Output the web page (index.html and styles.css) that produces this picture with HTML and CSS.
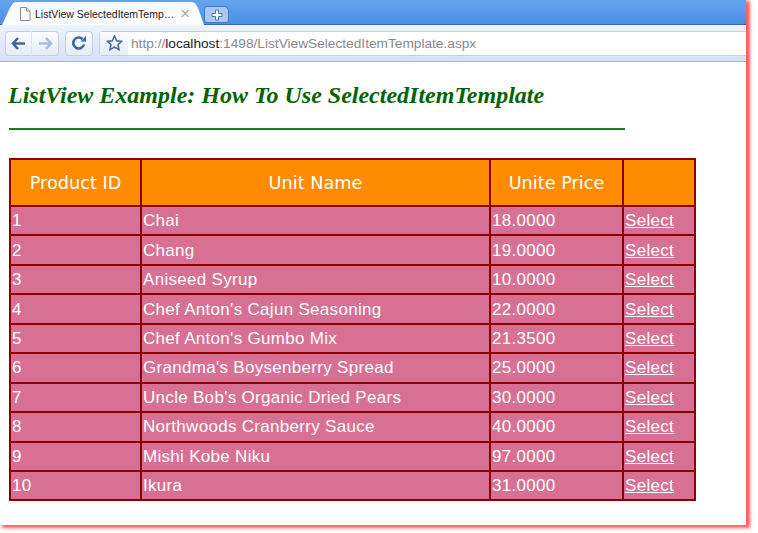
FILE: index.html
```html
<!DOCTYPE html>
<html lang="en">
<head>
<meta charset="utf-8">
<title>ListView SelectedItemTemplate</title>
<link rel="stylesheet" href="styles.css">
</head>
<body>
<div class="window">
  <div class="tabstrip">
    <div class="tab">
      <svg class="page-icon" width="12" height="14" viewBox="0 0 12 14"><path d="M1.5.5h6l3.5 3.5v9.500h-9.500z" fill="#fff" stroke="#8a8a8a"/><path d="M7.500.5v3.500h3.500" fill="#e8e8e8" stroke="#8a8a8a"/></svg>
      <span class="tab-title">ListView SelectedItemTemp…</span>
      <span class="tab-close">×</span>
    </div>
    <div class="new-tab"><svg width="12" height="12" viewBox="0 0 12 12"><path d="M4.500 1h3v3.500H11v3H7.500V11h-3V7.500H1v-3h3.500z" fill="#fff" stroke="#4a78b0"/></svg></div>
  </div>
  <div class="toolbar">
    <div class="btn-group">
      <div class="btn half"><svg width="15" height="13" viewBox="0 0 15 13"><path d="M7 1 2 6.500 7 12M2.500 6.500H14" fill="none" stroke="#3f6899" stroke-width="2.600"/></svg></div>
      <div class="btn half"><svg width="15" height="13" viewBox="0 0 15 13"><path d="M8 1l5 5.500L8 12M12.500 6.500H1" fill="none" stroke="#a9bdd8" stroke-width="2.600"/></svg></div>
    </div>
    <div class="btn single"><svg width="16" height="16" viewBox="0 0 16 16"><path d="M13 9.500A5.500 5.500 0 1 1 11.500 4" fill="none" stroke="#3f6899" stroke-width="2.600"/><path d="M9.500 6.500h5.500V1z" fill="#3f6899"/></svg></div>
    <div class="omnibox">
      <div class="star"><svg width="17" height="16" viewBox="0 0 17 16"><path d="M8.500 1l2.200 4.700 5 .6-3.700 3.400 1 5-4.500-2.500-4.500 2.500 1-5L1.300 6.300l5-.6z" fill="#f2f6fc" stroke="#3f6899" stroke-width="1.500"/></svg></div>
      <div class="url"><span class="dim">http://</span><span class="host">localhost</span><span class="dim">:1498/ListViewSelectedItemTemplate.aspx</span></div>
    </div>
  </div>
  <main class="content">
    <h1 class="title">ListView Example: How To Use SelectedItemTemplate</h1>
    <hr class="rule">
    <table class="products">
      <thead>
        <tr><th class="c1">Product ID</th><th class="c2">Unit Name</th><th class="c3">Unite Price</th><th class="c4"></th></tr>
      </thead>
      <tbody>
        <tr><td>1</td><td>Chai</td><td>18.0000</td><td><a href="#">Select</a></td></tr>
        <tr><td>2</td><td>Chang</td><td>19.0000</td><td><a href="#">Select</a></td></tr>
        <tr><td>3</td><td>Aniseed Syrup</td><td>10.0000</td><td><a href="#">Select</a></td></tr>
        <tr><td>4</td><td>Chef Anton's Cajun Seasoning</td><td>22.0000</td><td><a href="#">Select</a></td></tr>
        <tr><td>5</td><td>Chef Anton's Gumbo Mix</td><td>21.3500</td><td><a href="#">Select</a></td></tr>
        <tr><td>6</td><td>Grandma's Boysenberry Spread</td><td>25.0000</td><td><a href="#">Select</a></td></tr>
        <tr><td>7</td><td>Uncle Bob's Organic Dried Pears</td><td>30.0000</td><td><a href="#">Select</a></td></tr>
        <tr><td>8</td><td>Northwoods Cranberry Sauce</td><td>40.0000</td><td><a href="#">Select</a></td></tr>
        <tr><td>9</td><td>Mishi Kobe Niku</td><td>97.0000</td><td><a href="#">Select</a></td></tr>
        <tr><td>10</td><td>Ikura</td><td>31.0000</td><td><a href="#">Select</a></td></tr>
      </tbody>
    </table>
  </main>
</div>
</body>
</html>
```
FILE: styles.css
```css
html, body { margin: 0; padding: 0; background: #fff; }
body { width: 758px; height: 533px; overflow: hidden; }
.window {
  width: 746px;
  height: 525px;
  background: #fff;
  box-shadow: 3px 2px 3px 1px #ff5c5c;
  overflow: hidden;
}
.tabstrip {
  height: 24px;
  display: flex;
  align-items: flex-end;
  padding-left: 2px;
  background: linear-gradient(#66a3ee, #4a90e6);
  border-bottom: 1px solid #2f6cb5;
}
.tab {
  width: 202px;
  height: 23px;
  box-sizing: border-box;
  background: linear-gradient(#f4f8fe, #ffffff);
  display: flex;
  align-items: center;
  padding-left: 17px;
  clip-path: polygon(0 100%, 8px 25%, 11px 4%, 14px 0, 190px 0, 193px 4%, 196px 25%, 202px 100%);
  margin-bottom: -1px;
}
.page-icon { flex: none; }
.tab-title {
  font: 10.500px/14px "Liberation Sans", Arial, sans-serif;
  color: #222;
  margin-left: 4px;
  white-space: nowrap;
}
.tab-close { font: 17px/14px "Liberation Sans", sans-serif; color: #aaa; margin-left: 6px; }
.new-tab {
  width: 23px;
  height: 15px;
  margin: 0 0 1px 0;
  background: #a9c9f2;
  border: 1px solid #3f78c0;
  border-radius: 3px 5px 3px 3px;
  display: flex;
  align-items: center;
  justify-content: center;
}
.toolbar {
  height: 37px;
  box-sizing: border-box;
  background: linear-gradient(#eef3fc, #d5e1f7);
  border-bottom: 1px solid #a9b6c8;
  display: flex;
  align-items: center;
  padding: 0 0 0 5px;
}
.btn-group { display: flex; }
.btn {
  height: 25px;
  box-sizing: border-box;
  background: linear-gradient(#fafcff, #e4ecf8);
  border: 1px solid #c3d0e4;
  display: flex;
  align-items: center;
  justify-content: center;
}
.half { width: 27px; }
.half:first-child { border-radius: 4px 0 0 4px; border-right: 1px solid #dce4f0; }
.half:last-child { border-radius: 0 4px 4px 0; border-left: 0; }
.single { width: 28px; margin-left: 6px; border-radius: 4px; }
.omnibox {
  flex: 1;
  height: 25px;
  margin-left: 6px;
  display: flex;
  align-items: stretch;
  box-sizing: border-box;
  border: 1px solid #c3d0e4;
  border-right: 0;
  border-radius: 4px 0 0 4px;
}
.star {
  width: 28px;
  display: flex;
  align-items: center;
  justify-content: center;
  background: linear-gradient(#fafcff, #e4ecf8);
}
.url {
  flex: 1;
  background: #fff;
  font: 13.700px/23px "Liberation Sans", Arial, sans-serif;
  white-space: nowrap;
  padding-left: 3px;
}
.dim { color: #8a8a8a; }
.host { color: #222; }
.content { padding: 0 0 0 9px; }
.title {
  margin: 0 0 0 -1px;
  padding-top: 19px;
  font: italic bold 24px/28px "Liberation Serif", "Times New Roman", serif;
  color: #006400;
  white-space: nowrap;
}
.rule {
  width: 616px;
  height: 2px;
  margin: 19px 0 28px 0;
  border: 0;
  background: #1a7f1a;
}
.products {
  border-collapse: collapse;
  table-layout: fixed;
  color: #fff;
  background: #d87093;
  font: 16px/20px "DejaVu Sans", Verdana, sans-serif;
}
.products th, .products td { border: 2px solid #8b0000; padding: 0 1px; white-space: nowrap; overflow: hidden; }
.products th {
  height: 45px;
  background: #ff8c00;
  font-weight: normal;
  text-align: center;
  font-size: 17.700px;
}
.products td { height: 27.450px; font-family: "Liberation Sans", Arial, sans-serif; font-size: 17px; letter-spacing: .3px; line-height: 19px; }
.products a { color: #fff; text-decoration: underline; }
.c1 { width: 127px; }
.c2 { width: 345px; }
.c3 { width: 129px; }
.c4 { width: 68px; }
```
